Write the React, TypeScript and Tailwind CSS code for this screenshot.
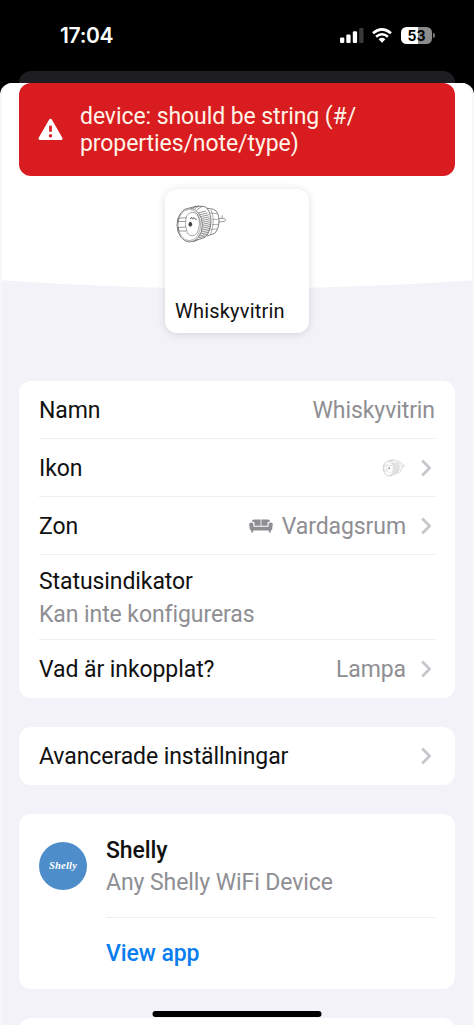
import type React from "react"

import { clsx } from "clsx"

interface SettingRowProps {
  label: string
  value?: string
  icon?: React.ReactNode
  chevron?: boolean
}

function PlugIcon({ className }: { className?: string }) {
  // Ribs start on the right edge of the front face and run back along the ring
  const ribs = Array.from({ length: 14 }, (_, i) => {
    const y = 52 + i * 5.8
    const offset = Math.sqrt(1 - ((y - 89) / 52) ** 2)
    return { y, x: 60 + 38 * offset, length: 16 + 9 * offset }
  })

  return (
    <svg viewBox="16 26 156 120" className={className} fill="none" stroke="currentColor" strokeWidth="2">
      {/* Rear housing and pins */}
      <path d="M108 38 L132 42 Q147 48 148 74 Q148 101 135 114 L112 122" fill="white" />
      <path d="M124 44 Q138 74 123 117 M122 53 L143 55 M122 102 L142 101 M128 72 L146 72 M128 88 L147 87" strokeWidth="1.3" />
      <path d="M148 70 L157 69 L158 60 M148 80 L158 79 M157 69 Q166 67 168 73 Q167 80 158 79" strokeWidth="1.6" />
      {/* Ribbed ring */}
      <path d="M60 38 Q86 28 106 34 Q124 46 124 80 Q121 113 106 126 L68 139" fill="white" />
      {ribs.map((rib) => (
        <path key={rib.y} d={`M${rib.x} ${rib.y} l${rib.length} -5`} strokeWidth="1.7" />
      ))}
      <path d="M70 37 L80 32 M76 39 L88 32 M82 43 L97 33 M74 138 L84 132" strokeWidth="1.7" />
      {/* Front face */}
      <ellipse cx="60" cy="89" rx="38" ry="51" fill="white" />
      <ellipse cx="59" cy="89" rx="34" ry="47" strokeWidth="1.3" />
      <path d="M50 62 Q66 42 84 58 Q95 84 83 112 Q69 130 53 114 Q43 88 50 62 Z" strokeWidth="1.4" />
      <path d="M27 69 L50 67 M25 79 L48 78 M25 97 L48 95 M27 107 L50 107 M25 69 L25 79 M26 97 L27 107" strokeWidth="1.6" />
      <path d="M61 71 L66 66 L68 71 L73 67 L77 72 L81 71" strokeWidth="2.6" />
      <ellipse cx="62" cy="87" rx="5.5" ry="7" fill="currentColor" stroke="none" />
    </svg>
  )
}

function ChevronIcon() {
  return (
    <svg viewBox="0 0 10 18" className="h-[18px] w-2.5 shrink-0" fill="none" stroke="#c7c7cb" strokeWidth="2.7">
      <path d="M1.2 1.5 8.6 9l-7.4 7.5" />
    </svg>
  )
}

function SofaIcon() {
  return (
    <svg viewBox="0 0 24 14" className="h-3.5 w-6" fill="#8e8e93">
      <path d="M5 .5h6.6v6.2H5.5V4.2C5.5 3.2 4.5 2.5 3 2.4 3.2 1.2 4 .5 5 .5ZM12.4.5H19c1 0 1.8.7 2 1.9-1.5.1-2.5.8-2.5 1.8v2.5h-6.1Z" />
      <path d="M2.3 3.4c1.3 0 2.1.8 2.1 2v2.3h15.2V5.4c0-1.2.8-2 2.1-2 1.3 0 2.1.9 2.1 2.1L23.2 10c-.1.9-.6 1.4-1.4 1.500v1.900h-2v-1.900H4.200v1.900h-2v-1.900C1.400 11.400.9 10.900.8 10L.2 5.500c0-1.200.8-2.100 2.100-2.100Z" />
    </svg>
  )
}

function StatusBar() {
  return (
    <header className="flex h-[71px] items-start justify-between pt-[22px] pr-[39px] pl-[60px] text-white">
      <span className="font-[Inter,sans-serif] text-[21px] leading-[27px] font-semibold tracking-[-0.3px]">17:04</span>
      <div className="flex h-[27px] items-center">
        <svg viewBox="0 0 24 16" className="mb-px h-[15px] w-6" preserveAspectRatio="none" fill="white">
          <rect x="0" y="10" width="4.3" height="6" rx="1.2" />
          <rect x="6.3" y="7" width="4.3" height="9" rx="1.2" />
          <rect x="12.8" y="3.5" width="4.3" height="12.5" rx="1.2" />
          <rect x="19.2" y="0" width="4.3" height="16" rx="1.2" fill="#3a3a3a" />
        </svg>
        <svg viewBox="0 0 20 15" className="mb-px ml-2 h-[15px] w-5" fill="none" stroke="white" strokeWidth="2.5">
          <path d="M1 5.2Q10-2.5 19 5.2M4.1 8.8Q10 3.6 15.9 8.8" />
          <path d="M10 14.8 6.6 11.2Q10 8.4 13.4 11.2Z" fill="white" stroke="none" />
        </svg>
        <div className="ml-[9px] flex h-[17px] w-[31px] items-center justify-center rounded-[5.5px] bg-[linear-gradient(90deg,#fff_54%,#8b8b8b_54%)] font-[Inter,sans-serif] text-[14px] leading-none font-bold text-black">
          53
        </div>
        <div className="ml-px h-[5px] w-0.5 rounded-r-full bg-[#777]"></div>
      </div>
    </header>
  )
}

function ErrorBanner() {
  return (
    <div className="mx-[19px] flex h-[93px] items-center rounded-[12px] bg-[#d91c1f] pl-[19px] text-white">
      <svg viewBox="0 0 25 23" className="h-[23px] w-[25px] shrink-0">
        <path d="M12.5 2.2 23 20.5H2Z" fill="white" stroke="white" strokeWidth="3" strokeLinejoin="round" />
        <path d="M12.5 7.8v6" stroke="#d91c1f" strokeWidth="2.7" />
        <circle cx="12.5" cy="17.8" r="1.7" fill="#d91c1f" />
      </svg>
      <p className="ml-[17px] pt-px leading-[27px] text-[#fff3e8]">
        device: should be string (#/
        <br />
        properties/note/type)
      </p>
    </div>
  )
}

function Card({ className, children }: { className?: string; children?: React.ReactNode }) {
  return <section className={clsx("mx-[19px] rounded-[12px] bg-white", className)}>{children}</section>
}

function SettingRow({ label, value, icon, chevron }: SettingRowProps) {
  return (
    <div className="flex h-[58px] items-center">
      <span className="grow pt-0.5">{label}</span>
      {icon}
      {value && <span className="ml-[9px] pt-0.5 text-[#8e8e93]">{value}</span>}
      {chevron && (
        <span className="mr-1 ml-[15px]">
          <ChevronIcon />
        </span>
      )}
    </div>
  )
}

export default function App() {
  return (
    <div className="relative h-[1027px] w-full overflow-hidden bg-black font-[Roboto,sans-serif] text-[23px] leading-7 tracking-[-0.08px] text-[#111]">
      <StatusBar />
      <div className="mx-[19px] h-3 rounded-t-[12px] bg-[#1d1d22]"></div>

      <main className="h-[944px] overflow-hidden rounded-t-[12px] border-x-2 border-b-2 border-x-[#f8f8fc] border-b-white bg-[#f3f2f9]">
        <div className="-mx-0.5">
          <div className="relative h-[298px]">
            <svg viewBox="0 0 474 206" className="absolute inset-x-0 top-0 h-[206px] w-full" fill="white">
              <path d="M0 0H474V197Q237 214 0 197Z" />
            </svg>
            <div className="relative">
              <ErrorBanner />
              <div className="mx-auto mt-[13px] flex size-36 flex-col justify-between rounded-[12px] bg-white px-2.5 pt-[15px] pb-2.5 shadow-[0_1px_8px_rgba(0,0,0,0.13)]">
                <PlugIcon className="h-10 w-[52px] text-[#444]" />
                <span className="text-[20px] leading-6 tracking-[0.2px]">Whiskyvitrin</span>
              </div>
            </div>
          </div>

          <Card className="px-5">
            <div className="divide-y divide-[#eeeef0]">
              <SettingRow label="Namn" value="Whiskyvitrin" />
              <SettingRow label="Ikon" icon={<PlugIcon className="h-[18px] w-6 text-[#999]" />} chevron />
              <SettingRow label="Zon" value="Vardagsrum" icon={<SofaIcon />} chevron />
              <div className="h-[85px] pt-[13px]">
                <div>Statusindikator</div>
                <div className="mt-[5px] text-[#8e8e93]">Kan inte konfigureras</div>
              </div>
              <SettingRow label="Vad är inkopplat?" value="Lampa" chevron />
            </div>
          </Card>

          <Card className="mt-[29px] px-5">
            <SettingRow label="Avancerade inställningar" chevron />
          </Card>

          <Card className="mt-[29px] flex h-[175px] px-5">
            <div className="mt-7 flex size-12 shrink-0 items-center justify-center rounded-full bg-[#4d8dc9] font-['Liberation_Serif',serif] text-[10.5px] font-bold tracking-[0.2px] text-white italic">
              Shelly
            </div>
            <div className="ml-[19px] grow">
              <div className="h-[104px] border-b border-[#eeeef0] pt-[23px]">
                <div className="font-medium">Shelly</div>
                <div className="mt-1 text-[#8e8e93]">Any Shelly WiFi Device</div>
              </div>
              <button className="mt-[22px] font-medium text-[#077df0]">View app</button>
            </div>
          </Card>

          <Card className="mt-[29px] h-10" />
        </div>
      </main>

      <div className="absolute bottom-2.5 left-1/2 h-1.5 w-[169px] -translate-x-1/2 rounded-full bg-black"></div>
    </div>
  )
}
